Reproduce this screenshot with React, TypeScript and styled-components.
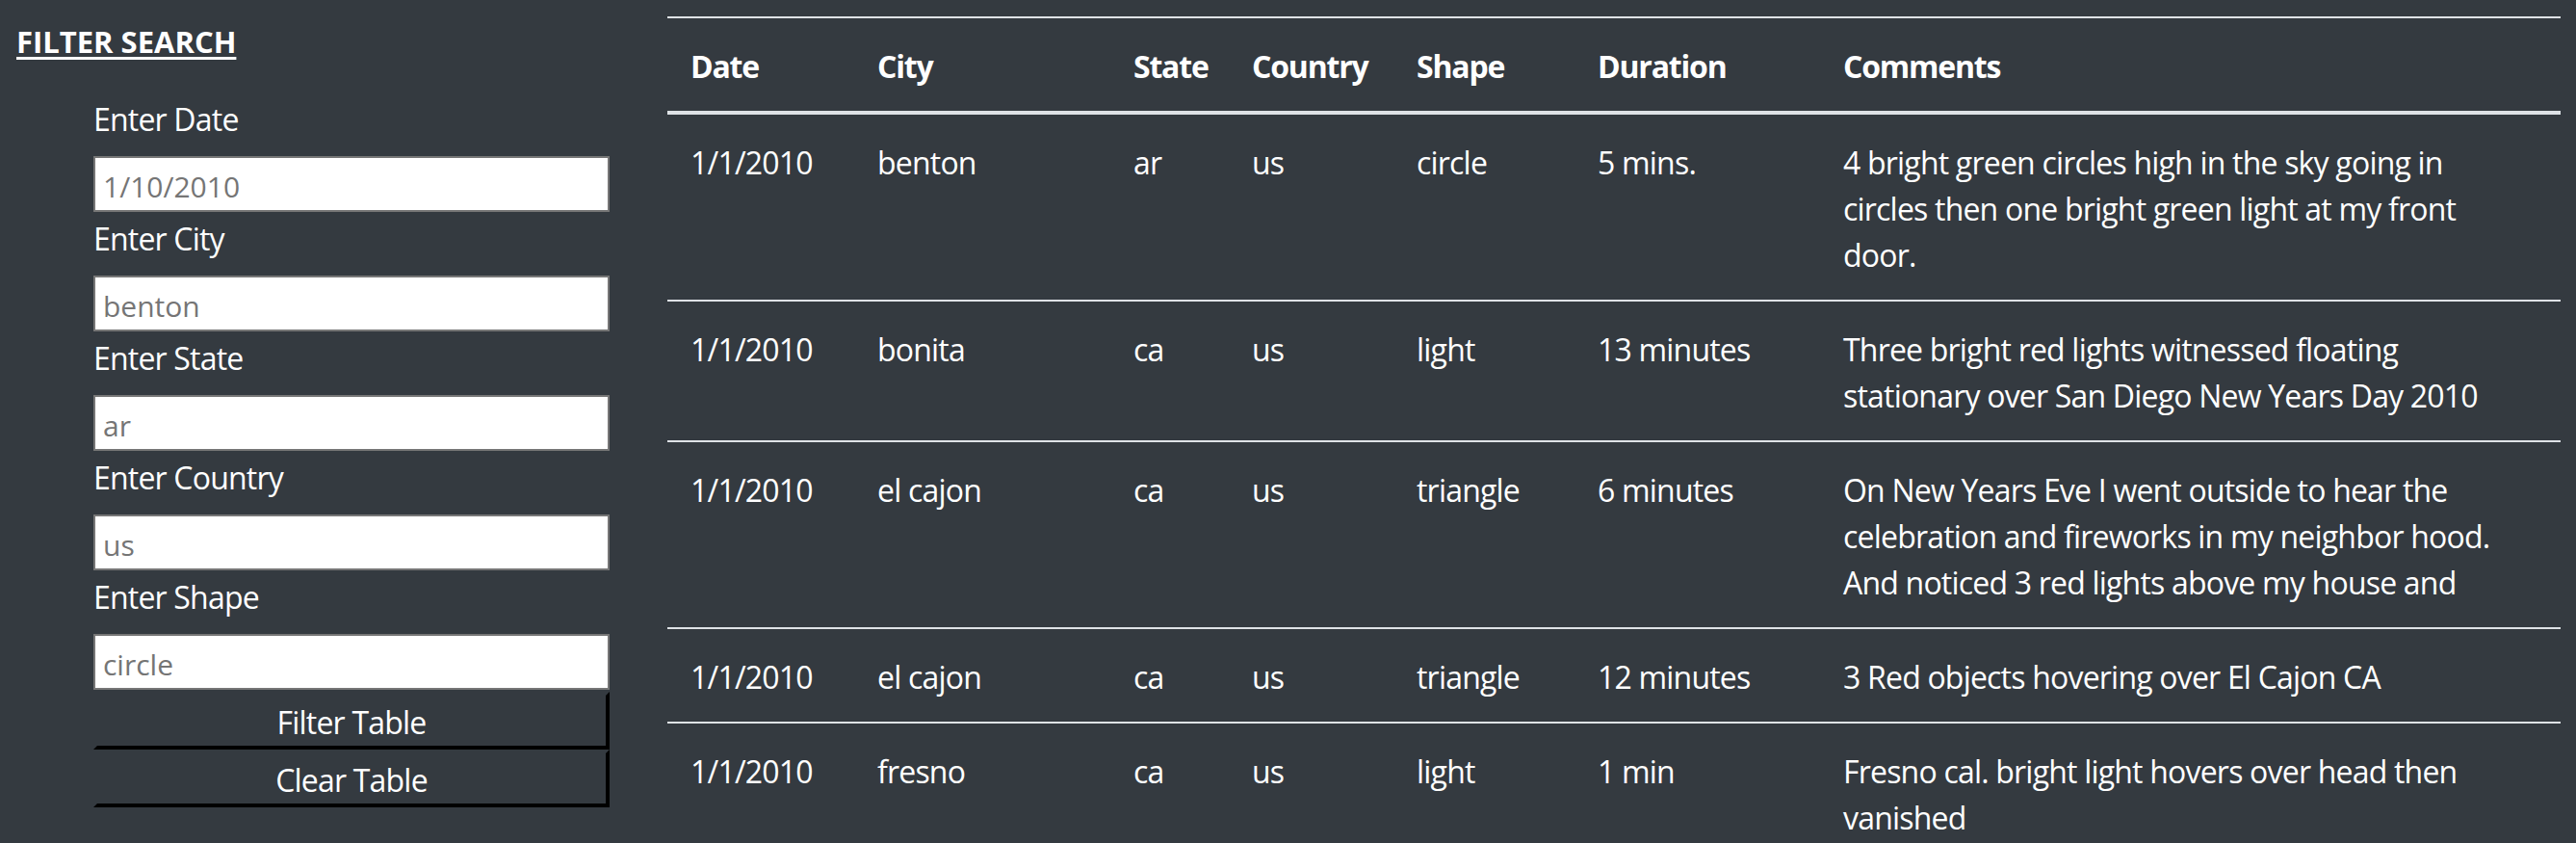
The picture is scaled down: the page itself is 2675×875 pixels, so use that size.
import React from 'react';
import styled, { createGlobalStyle } from 'styled-components';

const GlobalStyle = createGlobalStyle`
  html, body {
    margin: 0;
    padding: 0;
    background: #343a40;
  }
  body {
    font-family: "Open Sans", "Noto Sans", sans-serif;
    font-size: 32px;
    line-height: 48px;
    letter-spacing: -0.8px;
    color: #ffffff;
    overflow: hidden;
  }
`;

const Page = styled.div`
  display: flex;
  align-items: flex-start;
  width: 2675px;
  height: 875px;
  overflow: hidden;
`;

const Sidebar = styled.aside`
  flex: 0 0 693px;
  box-sizing: border-box;
  padding: 19px 0 0 17px;
`;

const SideTitle = styled.h4`
  margin: 0;
  font-size: 31px;
  font-weight: 700;
  line-height: 48px;
  letter-spacing: 0;
  text-decoration: underline;
  text-underline-offset: 4px;
`;

const FilterForm = styled.form`
  display: flex;
  flex-direction: column;
  width: 536px;
  margin: 31px 0 0 80px;
`;

const Field = styled.div`
  display: flex;
  flex-direction: column;
  margin-bottom: 2px;
`;

const FieldLabel = styled.label`
  line-height: 48px;
  padding-top: 2px;
  margin-bottom: 14px;
`;

const FieldInput = styled.input`
  box-sizing: border-box;
  height: 58px;
  width: 100%;
  margin: 0;
  padding: 4px 8px 0;
  border: 2px solid #767676;
  background: #ffffff;
  font-family: inherit;
  font-size: 30px;
  letter-spacing: 0;
  color: #333;

  &::placeholder {
    color: #757575;
  }
`;

const ActionButton = styled.button`
  box-sizing: border-box;
  width: 100%;
  height: 60px;
  margin: 0;
  padding: 4px 0 0;
  background: #343a40;
  border: 4px solid;
  border-color: #343a40 #000000 #000000 #343a40;
  color: #ffffff;
  font-family: inherit;
  font-size: 32px;
  letter-spacing: -0.8px;
  line-height: 44px;
  cursor: pointer;
`;

const TableWrap = styled.main`
  flex: 1;
  box-sizing: border-box;
  padding: 17px 16px 0 0;
`;

const DataTable = styled.table`
  width: 100%;
  table-layout: fixed;
  border-collapse: collapse;
  color: #ffffff;
`;

const Col = styled.col<{ $w: number }>`
  width: ${(p) => p.$w}px;
`;

const HeadCell = styled.th`
  text-align: left;
  font-weight: 700;
  letter-spacing: -1.2px;
  padding: 26px 24px 22px;
  line-height: 48px;
  border-top: 2px solid #dee2e6;
  border-bottom: 4px solid #dee2e6;
  white-space: nowrap;
`;

const Cell = styled.td`
  padding: 26px 24px 22px;
  line-height: 48px;
  vertical-align: top;
  border-top: 2px solid #dee2e6;
  white-space: pre-line;
`;

const fields = [
  { label: 'Enter Date', id: 'datetime', placeholder: '1/10/2010' },
  { label: 'Enter City', id: 'city', placeholder: 'benton' },
  { label: 'Enter State', id: 'state', placeholder: 'ar' },
  { label: 'Enter Country', id: 'country', placeholder: 'us' },
  { label: 'Enter Shape', id: 'shape', placeholder: 'circle' },
];

const columns = [
  { name: 'Date', width: 194 },
  { name: 'City', width: 266 },
  { name: 'State', width: 123 },
  { name: 'Country', width: 171 },
  { name: 'Shape', width: 188 },
  { name: 'Duration', width: 255 },
  { name: 'Comments', width: 769 },
];

interface Sighting {
  datetime: string;
  city: string;
  state: string;
  country: string;
  shape: string;
  duration: string;
  comments: string;
}

const sightings: Sighting[] = [
  {
    datetime: '1/1/2010',
    city: 'benton',
    state: 'ar',
    country: 'us',
    shape: 'circle',
    duration: '5 mins.',
    comments:
      '4 bright green circles high in the sky going in\ncircles then one bright green light at my front\ndoor.',
  },
  {
    datetime: '1/1/2010',
    city: 'bonita',
    state: 'ca',
    country: 'us',
    shape: 'light',
    duration: '13 minutes',
    comments: 'Three bright red lights witnessed floating\nstationary over San Diego New Years Day 2010',
  },
  {
    datetime: '1/1/2010',
    city: 'el cajon',
    state: 'ca',
    country: 'us',
    shape: 'triangle',
    duration: '6 minutes',
    comments:
      'On New Years Eve I went outside to hear the\ncelebration and fireworks in my neighbor hood.\nAnd noticed 3 red lights above my house and',
  },
  {
    datetime: '1/1/2010',
    city: 'el cajon',
    state: 'ca',
    country: 'us',
    shape: 'triangle',
    duration: '12 minutes',
    comments: '3 Red objects hovering over El Cajon CA',
  },
  {
    datetime: '1/1/2010',
    city: 'fresno',
    state: 'ca',
    country: 'us',
    shape: 'light',
    duration: '1 min',
    comments: 'Fresno cal. bright light hovers over head then\nvanished',
  },
];

function App() {
  return (
    <>
      <GlobalStyle />
      <Page>
        <Sidebar>
          <SideTitle>FILTER SEARCH</SideTitle>
          <FilterForm onSubmit={(e) => e.preventDefault()}>
            {fields.map((f) => (
              <Field key={f.id}>
                <FieldLabel htmlFor={f.id}>{f.label}</FieldLabel>
                <FieldInput id={f.id} type="text" placeholder={f.placeholder} />
              </Field>
            ))}
            <ActionButton type="submit">Filter Table</ActionButton>
            <ActionButton type="button">Clear Table</ActionButton>
          </FilterForm>
        </Sidebar>
        <TableWrap>
          <DataTable>
            <colgroup>
              {columns.map((c) => (
                <Col key={c.name} $w={c.width} />
              ))}
            </colgroup>
            <thead>
              <tr>
                {columns.map((c) => (
                  <HeadCell key={c.name}>{c.name}</HeadCell>
                ))}
              </tr>
            </thead>
            <tbody>
              {sightings.map((s, i) => (
                <tr key={i}>
                  <Cell>{s.datetime}</Cell>
                  <Cell>{s.city}</Cell>
                  <Cell>{s.state}</Cell>
                  <Cell>{s.country}</Cell>
                  <Cell>{s.shape}</Cell>
                  <Cell>{s.duration}</Cell>
                  <Cell>{s.comments}</Cell>
                </tr>
              ))}
            </tbody>
          </DataTable>
        </TableWrap>
      </Page>
    </>
  );
}

export default App;
